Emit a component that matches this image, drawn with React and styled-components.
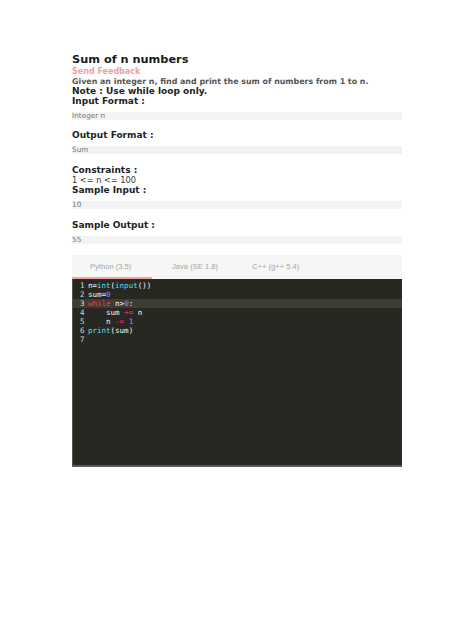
import React from "react";
import styled, { createGlobalStyle } from "styled-components";

const Global = createGlobalStyle`
  html, body { margin: 0; padding: 0; background: #fff; }
  body { font-family: "DejaVu Sans", sans-serif; }
`;

const Page = styled.div`
  width: 474px;
  height: 632px;
  padding: 53px 72px 0 72px;
  box-sizing: border-box;
`;

const Title = styled.h1`
  margin: 0;
  font-size: 11.3px;
  line-height: 14px;
  font-weight: bold;
  color: #1a1a1a;
`;

const Feedback = styled.div`
  font-size: 8px;
  line-height: 9px;
  font-weight: bold;
  color: #f39ea2;
`;

const Desc = styled.p`
  margin: 0;
  margin-top: 1px;
  font-size: 7.9px;
  line-height: 9px;
  font-weight: bold;
  color: #555;
`;

const Heading = styled.div`
  font-size: 9px;
  line-height: 10px;
  font-weight: bold;
  color: #1e1e1e;
  margin-top: ${(p) => p.$gap || 0}px;
`;

const Plain = styled.div`
  font-size: 8.2px;
  line-height: 10px;
  color: #333;
`;

const Box = styled.div`
  margin-top: ${(p) => p.$gap || 6}px;
  height: 8px;
  background: #f3f3f3;
  font-size: 7.3px;
  line-height: 8px;
  color: #777;
`;

const Ide = styled.div`
  margin-top: 11px;
  width: 330px;
`;

const Tabs = styled.div`
  height: 24px;
  background: #f6f6f6;
  display: flex;
  align-items: stretch;
`;

const Tab = styled.div`
  width: 80px;
  box-sizing: border-box;
  padding-left: ${(p) => p.$pad}px;
  display: flex;
  align-items: center;
  font-family: "Liberation Sans", sans-serif;
  font-size: 7.6px;
  color: #a6a6a6;
  border-bottom: 2px solid ${(p) => (p.$active ? "#f2a3a6" : "transparent")};
`;

const Editor = styled.div`
  height: 184px;
  background: #272822;
  border-bottom: 2px solid #5a5a5a;
  border-left: 1px solid #555;
  padding-top: 2px;
  font-family: "DejaVu Sans Mono", monospace;
  font-size: 7.5px;
  overflow: hidden;
`;

const Line = styled.div`
  display: flex;
  height: 9px;
  line-height: 9px;
  background: ${(p) => (p.$hl ? "#3e3d32" : "transparent")};
  white-space: pre;
`;

const Num = styled.span`
  width: 18px;
  flex: none;
  box-sizing: border-box;
  padding-left: 7px;
  color: #d6d6d0;
  position: relative;
  z-index: 1;
`;

const Code = styled.span`
  margin-left: -3px;
  color: #f8f8f2;
`;

const K = styled.span`
  color: ${(p) => p.$c};
`;

const blue = "#66d9ef";
const pink = "#f92672";
const purple = "#ae81ff";

const lines = [
  [["n="], ["int", blue], ["("], ["input", blue], ["())"]],
  [["sum="], ["0", purple]],
  [["while", pink], [" n>"], ["0", purple], [":"]],
  [["    sum "], ["+=", pink], [" n"]],
  [["    n "], ["-=", pink], [" "], ["1", purple]],
  [["print", blue], ["(sum)"]],
  [[""]],
];

export default function App() {
  return (
    <Page>
      <Global />
      <Title>Sum of n numbers</Title>
      <Feedback>Send Feedback</Feedback>
      <Desc>Given an integer n, find and print the sum of numbers from 1 to n.</Desc>
      <Heading>Note : Use while loop only.</Heading>
      <Heading>Input Format :</Heading>
      <Box>Integer n</Box>
      <Heading $gap={10}>Output Format :</Heading>
      <Box>Sum</Box>
      <Heading $gap={11}>Constraints :</Heading>
      <Plain>1 &lt;= n &lt;= 100</Plain>
      <Heading>Sample Input :</Heading>
      <Box>10</Box>
      <Heading $gap={11}>Sample Output :</Heading>
      <Box>55</Box>
      <Ide>
        <Tabs>
          <Tab $active $pad={18}>Python (3.5)</Tab>
          <Tab $pad={20}>Java (SE 1.8)</Tab>
          <Tab $pad={20}>C++ (g++ 5.4)</Tab>
        </Tabs>
        <Editor>
          {lines.map((parts, i) => (
            <Line key={i} $hl={i === 2}>
              <Num>{i + 1}</Num>
              <Code>
                {parts.map(([t, c], j) =>
                  c ? (
                    <K key={j} $c={c}>
                      {t}
                    </K>
                  ) : (
                    <React.Fragment key={j}>{t}</React.Fragment>
                  )
                )}
              </Code>
            </Line>
          ))}
        </Editor>
      </Ide>
    </Page>
  );
}
